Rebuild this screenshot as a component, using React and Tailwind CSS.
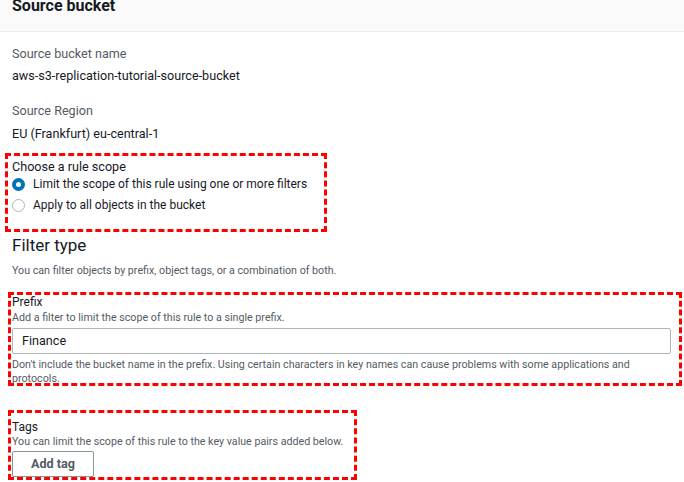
export default function App() {
  const font = { fontFamily: 'Roboto, "Liberation Sans", sans-serif' };
  return (
    <div className="w-[684px] h-[482px] overflow-hidden bg-white text-[#16191f]" style={font}>
      <div className="h-[32px] bg-[#fafafa] border-b border-[#eaeded] px-[12px] overflow-hidden">
        <div className="text-[16px] font-bold leading-[20px] mt-[-4px]">Source bucket</div>
      </div>
      <div className="px-[12px] pt-[14px]">
        <div className="text-[12.6px] leading-[16px] text-[#545b64]">Source bucket name</div>
        <div className="text-[12.6px] leading-[16px] mt-[6px]">aws-s3-replication-tutorial-source-bucket</div>
        <div className="text-[12.6px] leading-[16px] text-[#545b64] mt-[19px]">Source Region</div>
        <div className="text-[12.6px] leading-[16px] mt-[7px]">EU (Frankfurt) eu-central-1</div>
      </div>
      <div className="ml-[5px] mt-[11px] w-[322px] h-[79px] border-[3px] border-dashed border-[#ff0000] pl-[4px] pt-[3px]">
        <div className="text-[12.6px] leading-[16px]">Choose a rule scope</div>
        <div className="flex items-center mt-[0px] h-[18px]">
          <span className="w-[13px] h-[13px] rounded-full bg-[#0073bb] flex items-center justify-center shrink-0">
            <span className="w-[5px] h-[5px] rounded-full bg-white" />
          </span>
          <span className="ml-[8px] text-[12px] leading-[16px] whitespace-nowrap">Limit the scope of this rule using one or more filters</span>
        </div>
        <div className="flex items-center mt-[3px] h-[18px]">
          <span className="w-[13px] h-[13px] rounded-full border border-[#aab7b8] bg-white shrink-0" />
          <span className="ml-[8px] text-[12px] leading-[16px] whitespace-nowrap">Apply to all objects in the bucket</span>
        </div>
      </div>
      <div className="px-[12px] pt-[2px]">
        <div className="text-[17px] leading-[22px]">Filter type</div>
        <div className="text-[10.7px] leading-[14px] text-[#545b64] mt-[8px]">You can filter objects by prefix, object tags, or a combination of both.</div>
      </div>
      <div className="ml-[8px] mt-[14px] w-[674px] h-[94px] border-[3px] border-dashed border-[#ff0000] pl-[1px] pr-[8px]">
        <div className="text-[12px] leading-[14px]">Prefix</div>
        <div className="text-[10.7px] leading-[14px] text-[#545b64] mt-[2px]">Add a filter to limit the scope of this rule to a single prefix.</div>
        <div className="mt-[3px] h-[26px] border border-[#aab7b8] rounded-[2px] flex items-center pl-[9px] text-[12.6px]">Finance</div>
        <div className="text-[10.7px] leading-[14px] text-[#545b64] mt-[4px] pr-[20px]">Don't include the bucket name in the prefix. Using certain characters in key names can cause problems with some applications and protocols.</div>
      </div>
      <div className="ml-[8px] mt-[24px] w-[349px] h-[70px] border-[3px] border-dashed border-[#ff0000] pl-[1px] pt-[7px]">
        <div className="text-[12px] leading-[14px]">Tags</div>
        <div className="text-[10.7px] leading-[14px] text-[#545b64] mt-[1px]">You can limit the scope of this rule to the key value pairs added below.</div>
        <div className="mt-[2px] w-[82px] h-[26px] border border-[#879596] rounded-[2px] flex items-center justify-center text-[12.6px] font-bold text-[#545b64]">Add tag</div>
      </div>
    </div>
  );
}
